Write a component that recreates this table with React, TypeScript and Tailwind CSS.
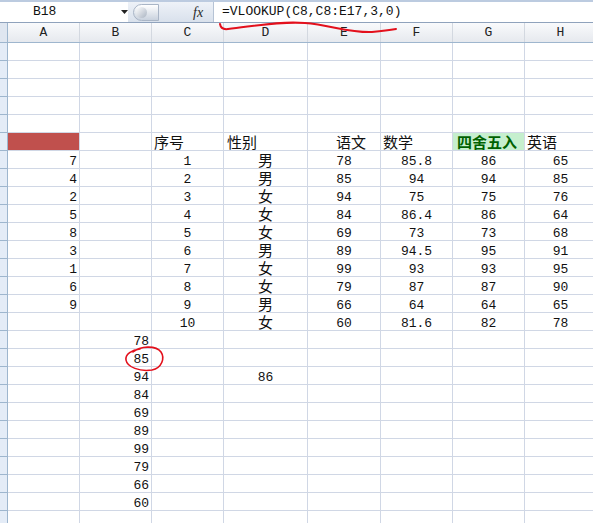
import React from "react";

type Cell = { t?: string; cjk?: boolean; cls?: string };

const widths = ["w-[72px]", "w-[72px]", "w-[72px]", "w-[84px]", "w-[73px]", "w-[72px]", "w-[72px]", "w-[72px]"];
const letters = ["A", "B", "C", "D", "E", "F", "G", "H"];

const num = "font-['Liberation_Mono',monospace] text-[13px] leading-[12px] pt-[5px]";
const cjk = "font-['Noto_Sans_CJK_SC',sans-serif] text-[15px] leading-[17px]";

const R = (t: string): Cell => ({ t, cls: "justify-end pr-[2px]" });
const M = (t: string): Cell => ({ t, cls: "justify-center" });
const K = (t: string): Cell => ({ t, cjk: true, cls: "justify-center" });
const E: Cell = {};

const scores: [string, string, string, string, string, string, string][] = [
  ["7", "1", "男", "78", "85.8", "86", "65"],
  ["4", "2", "男", "85", "94", "94", "85"],
  ["2", "3", "女", "94", "75", "75", "76"],
  ["5", "4", "女", "84", "86.4", "86", "64"],
  ["8", "5", "女", "69", "73", "73", "68"],
  ["3", "6", "男", "89", "94.5", "95", "91"],
  ["1", "7", "女", "99", "93", "93", "95"],
  ["6", "8", "女", "79", "87", "87", "90"],
  ["9", "9", "男", "66", "64", "64", "65"],
  ["", "10", "女", "60", "81.6", "82", "78"],
];

const lookups = ["78", "85", "94", "84", "69", "89", "99", "79", "66", "60"];

function buildRows(): Cell[][] {
  const rows: Cell[][] = [];
  for (let i = 0; i < 5; i++) rows.push([E, E, E, E, E, E, E, E]);
  rows.push([
    { cls: "bg-[#c0504d]" },
    E,
    { t: "序号", cjk: true, cls: "pl-[2px]" },
    { t: "性别", cjk: true, cls: "pl-[3px]" },
    { t: "语文", cjk: true, cls: "pl-[28px]" },
    { t: "数学", cjk: true, cls: "pl-[2px]" },
    { t: "四舍五入", cjk: true, cls: "pl-[4px] bg-[#c6efce] text-[#006100] font-bold" },
    { t: "英语", cjk: true, cls: "pl-[2px]" },
  ]);
  scores.forEach(([a, c, d, e, f, g, h]) => {
    rows.push([R(a), E, M(c), K(d), M(e), M(f), M(g), M(h)]);
  });
  lookups.forEach((v, i) => {
    rows.push([E, R(v), E, i === 2 ? M("86") : E, E, E, E, E]);
  });
  rows.push([E, E, E, E, E, E, E, E]);
  return rows;
}

function FormulaBar() {
  return (
    <div className="flex h-[23px] border-t-2 border-b border-t-[#bccbe0] border-b-[#8fa2bc] bg-gradient-to-b from-[#eef2f8] to-[#d9e1ec]">
      <div className="relative flex w-[128px] items-center bg-white pl-[33px] font-['Liberation_Mono',monospace] text-[13px] text-[#111]">
        B18
        <svg className="absolute left-[121px] top-[8px]" width="7" height="4" viewBox="0 0 7 4">
          <path d="M0 0H7L3.5 4Z" fill="#222" />
        </svg>
      </div>
      <div className="flex w-[86px] items-center">
        <div className="ml-[5px] flex h-[17px] w-[26px] items-center rounded-l-full border border-[#a9b5c6] bg-gradient-to-b from-[#ffffff] to-[#c9d2de] pl-[2px]">
          <div className="h-[11px] w-[11px] rounded-full bg-gradient-to-br from-[#ffffff] to-[#aab4c2]" />
        </div>
        <span className="ml-[34px] font-['Liberation_Serif',serif] text-[14px] italic text-[#2a2a2a]">fx</span>
        <div className="ml-auto h-full w-px bg-[#b6c3d5]" />
      </div>
      <div className="flex flex-1 items-center bg-white pl-[8px] font-['Liberation_Mono',monospace] text-[13px] text-[#111]">
        =VLOOKUP(C8,C8:E17,3,0)
      </div>
    </div>
  );
}

function HeaderRow() {
  return (
    <div className="flex h-[20px] border-b border-b-[#9eb6ce]">
      <div className="w-[8px] shrink-0 border-r border-r-[#9eb6ce] bg-[#dfe6f0]" />
      {letters.map((l, i) => (
        <div
          key={l}
          className={`${widths[i]} flex shrink-0 items-center justify-center border-r border-r-[#d3d8e0] bg-gradient-to-b from-[#f9fafc] to-[#e6e9ee] font-['Liberation_Mono',monospace] text-[13px] text-[#222]`}
        >
          {l}
        </div>
      ))}
    </div>
  );
}

export default function App() {
  const rows = buildRows();
  return (
    <div className="relative h-[523px] w-[593px] overflow-hidden bg-white text-[#111]">
      <FormulaBar />
      <HeaderRow />
      {rows.map((row, r) => (
        <div key={r} className="flex h-[18px]">
          <div className="w-[8px] shrink-0 border-r border-b border-r-[#9eb6ce] border-b-[#9eb6ce] bg-[#e4ecf7]" />
          {row.map((c, i) => (
            <div
              key={i}
              className={`${widths[i]} flex shrink-0 border-r border-b border-[#d0d7e5] whitespace-nowrap ${c.cjk ? cjk : num} ${c.cls ?? ""}`}
            >
              {c.t}
            </div>
          ))}
        </div>
      ))}
      <svg className="pointer-events-none absolute left-0 top-0" width="593" height="523" viewBox="0 0 593 523">
        <path
          d="M220 24 Q221 30 228 29 C255 26 280 21 305 23 C330 25 350 33 372 32 C382 31 390 30 396 29"
          fill="none"
          stroke="#e3101c"
          strokeWidth="2"
          strokeLinecap="round"
        />
        <path
          d="M133 352 C140 346 156 345 161 352 C165 358 162 368 152 370 C140 372 127 367 126 360 C125 354 132 350 140 349"
          fill="none"
          stroke="#e3101c"
          strokeWidth="1.6"
          strokeLinecap="round"
        />
      </svg>
    </div>
  );
}
